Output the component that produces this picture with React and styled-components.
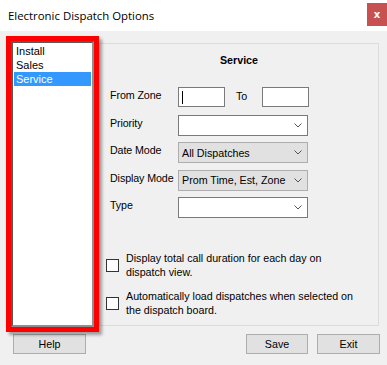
import React from "react";
import styled, { createGlobalStyle } from "styled-components";

const Global = createGlobalStyle`
  html, body { margin: 0; padding: 0; background: #f0f0f0; }
  body { font-family: "Liberation Sans", Arial, sans-serif; font-size: 10.7px; color: #000; }
`;

const Window = styled.div`
  width: 387px;
  height: 365px;
  display: flex;
  flex-direction: column;
  background: #f0f0f0;
  overflow: hidden;
`;

const TitleBar = styled.div`
  height: 31px;
  background: #fff;
  display: flex;
  align-items: center;
  justify-content: space-between;
  padding-left: 8px;
  box-sizing: border-box;
`;

const Title = styled.span`
  font-family: "Open Sans", "Liberation Sans", sans-serif;
  font-size: 11.4px;
  color: #000;
`;

const CloseBtn = styled.div`
  width: 20px;
  height: 23px;
  margin-top: -2px;
  background: #c75050;
  color: #fff;
  font-family: "DejaVu Sans", sans-serif;
  font-weight: bold;
  font-size: 10px;
  display: flex;
  align-items: center;
  justify-content: center;
`;

const Body = styled.div`
  display: flex;
  padding: 5px 0 0 6px;
`;

const Frame = styled.div`
  width: 93px;
  height: 296px;
  box-sizing: border-box;
  border: 5px solid #ff0000;
  box-shadow: 3px 3px 3px rgba(0, 0, 0, 0.35);
  position: relative;
  z-index: 1;
  background: #ff0000;
`;

const ListBox = styled.div`
  width: 100%;
  height: 100%;
  box-sizing: border-box;
  background: #fff;
  border-top: 2px solid #5a5a5a;
  border-left: 2px solid #5a5a5a;
  border-right: 2px solid #8f8f8f;
  border-bottom: 2px solid #8f8f8f;
  padding-top: 1px;
  display: flex;
  flex-direction: column;
  font-size: 11px;
`;

const ListItem = styled.div`
  height: 14px;
  line-height: 14px;
  padding-left: 2px;
  margin: 0 1px;
  background: ${(p) => (p.$selected ? "#3399ff" : "transparent")};
  color: ${(p) => (p.$selected ? "#fff" : "#000")};
`;

const Group = styled.div`
  margin-top: 7px;
  width: 280px;
  height: 283px;
  box-sizing: border-box;
  border: 1px solid #dcdcdc;
  display: flex;
  flex-direction: column;
  padding: 0 0 0 10px;
`;

const GroupTitle = styled.div`
  font-weight: bold;
  text-align: center;
  margin-top: 9px;
  height: 14px;
  line-height: 14px;
  padding-right: 10px;
`;

const Fields = styled.div`
  margin-top: 20px;
  display: grid;
  grid-template-columns: 68px auto;
  grid-auto-rows: 21px;
  row-gap: 6.5px;
  align-items: center;
`;

const Label = styled.div`
  height: 21px;
  line-height: 16px;
  letter-spacing: -0.1px;
`;

const ZoneRow = styled.div`
  display: flex;
  align-items: center;
  height: 21px;
`;

const TextBox = styled.div`
  width: ${(p) => p.$w}px;
  height: 20px;
  box-sizing: border-box;
  border: 1px solid #7a7a7a;
  background: #fff;
  display: flex;
  align-items: center;
  padding-left: 3px;
  margin-top: -1px;
`;

const Caret = styled.div`
  width: 1px;
  height: 13px;
  background: #000;
`;

const ToLabel = styled.span`
  margin: -4px 0 0 11px;
  width: 26px;
`;

const Combo = styled.div`
  width: 130px;
  height: 21px;
  box-sizing: border-box;
  border: 1px solid ${(p) => (p.$gray ? "#adadad" : "#7a7a7a")};
  background: ${(p) => (p.$gray ? "#e1e1e1" : "#fff")};
  display: flex;
  align-items: center;
  justify-content: space-between;
  padding: 0 5px 0 3px;
`;

const Chevron = () => (
  <svg width="8" height="5" viewBox="0 0 8 5">
    <path d="M0.5 0.5 L4 4 L7.5 0.5" fill="none" stroke="#555" strokeWidth="1" />
  </svg>
);

const Checks = styled.div`
  margin-top: 33px;
  margin-left: -4px;
  display: flex;
  flex-direction: column;
  gap: 10px;
`;

const CheckRow = styled.div`
  display: flex;
  align-items: center;
`;

const Box = styled.div`
  width: 13px;
  height: 13px;
  box-sizing: border-box;
  border: 1px solid #333;
  background: #fff;
  flex: none;
  margin-right: 7px;
`;

const CheckText = styled.div`
  line-height: 14px;
  width: 230px;
`;

const Footer = styled.div`
  display: flex;
  align-items: center;
  padding: 2px 7px 0 13px;
`;

const Button = styled.div`
  width: ${(p) => p.$w}px;
  height: 20px;
  box-sizing: border-box;
  border: 1px solid #adadad;
  background: #e1e1e1;
  display: flex;
  align-items: center;
  justify-content: center;
  margin-left: ${(p) => p.$ml || 0}px;
`;

const Spacer = styled.div`
  flex: 1;
`;

export default function App() {
  return (
    <Window>
      <Global />
      <TitleBar>
        <Title>Electronic Dispatch Options</Title>
        <CloseBtn>x</CloseBtn>
      </TitleBar>
      <Body>
        <Frame>
          <ListBox>
            <ListItem>Install</ListItem>
            <ListItem>Sales</ListItem>
            <ListItem $selected>Service</ListItem>
          </ListBox>
        </Frame>
        <Group>
          <GroupTitle>Service</GroupTitle>
          <Fields>
            <Label>From Zone</Label>
            <ZoneRow>
              <TextBox $w={47}>
                <Caret />
              </TextBox>
              <ToLabel>To</ToLabel>
              <TextBox $w={47} />
            </ZoneRow>
            <Label>Priority</Label>
            <Combo>
              <span />
              <Chevron />
            </Combo>
            <Label>Date Mode</Label>
            <Combo $gray>
              <span>All Dispatches</span>
              <Chevron />
            </Combo>
            <Label>Display Mode</Label>
            <Combo $gray>
              <span>Prom Time, Est, Zone</span>
              <Chevron />
            </Combo>
            <Label>Type</Label>
            <Combo>
              <span />
              <Chevron />
            </Combo>
          </Fields>
          <Checks>
            <CheckRow>
              <Box />
              <CheckText>Display total call duration for each day on dispatch view.</CheckText>
            </CheckRow>
            <CheckRow>
              <Box />
              <CheckText>Automatically load dispatches when selected on the dispatch board.</CheckText>
            </CheckRow>
          </Checks>
        </Group>
      </Body>
      <Footer>
        <Button $w={73}>Help</Button>
        <Spacer />
        <Button $w={62}>Save</Button>
        <Button $w={63} $ml={9}>Exit</Button>
      </Footer>
    </Window>
  );
}
